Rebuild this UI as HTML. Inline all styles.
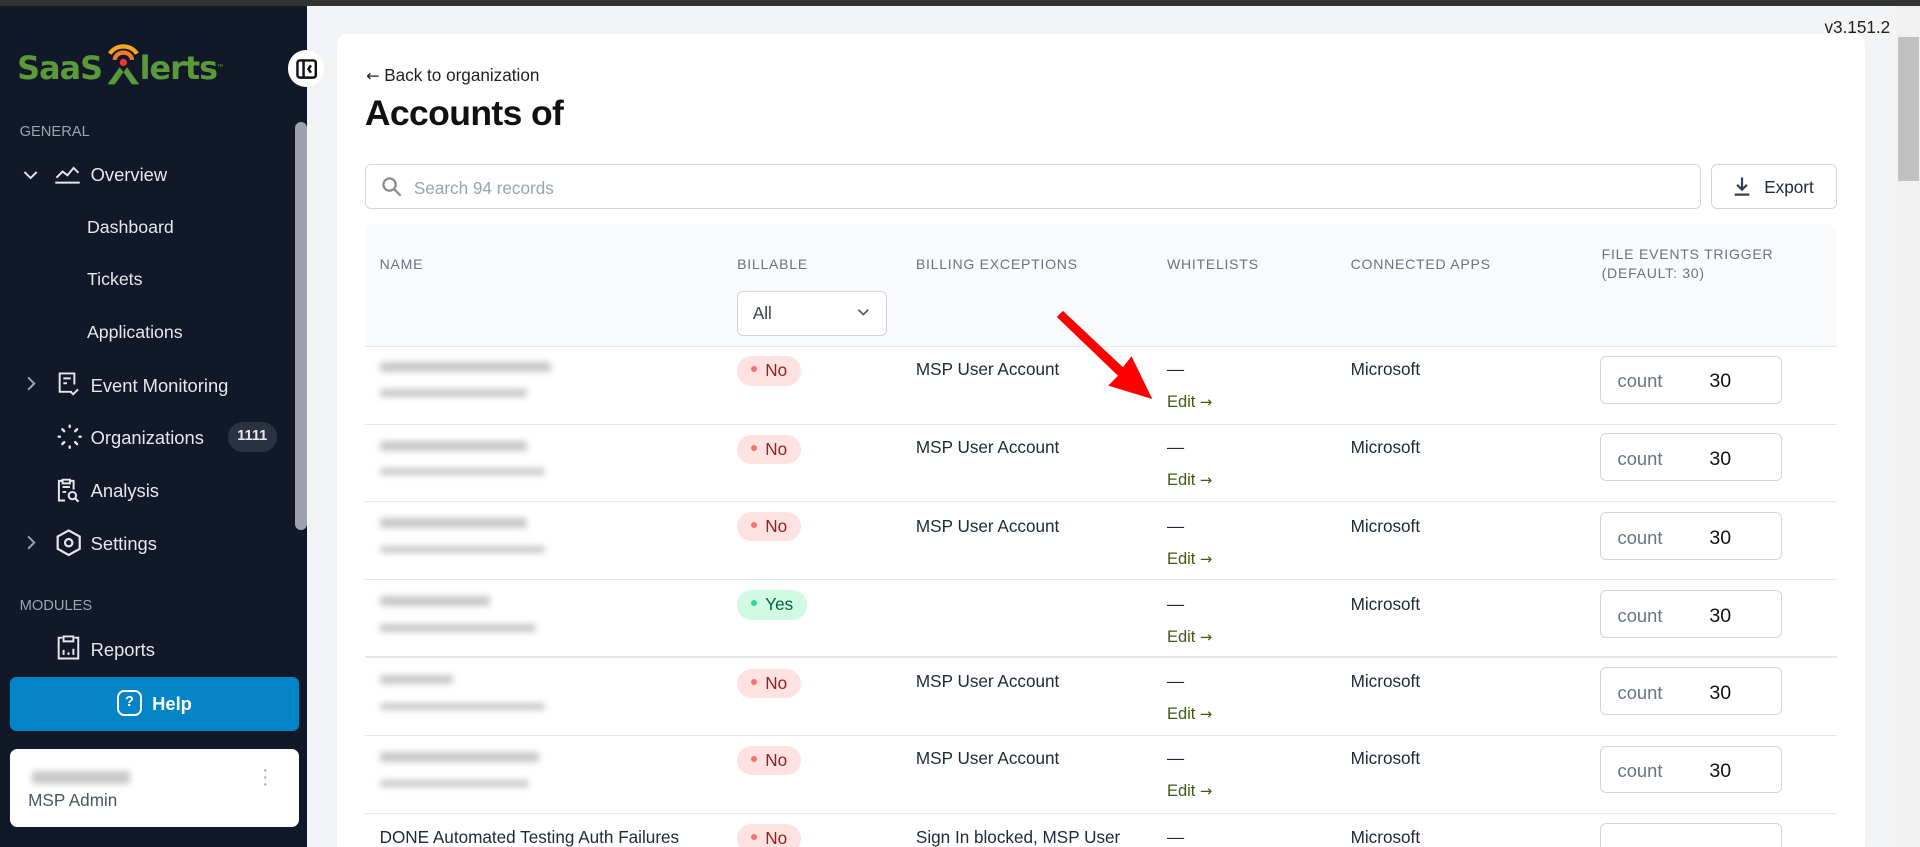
<!DOCTYPE html>
<html><head><meta charset="utf-8"><style>
*{box-sizing:border-box;margin:0;padding:0}
html,body{width:1920px;height:847px;overflow:hidden;background:#f3f4f6}
#r{zoom:1.22449;width:1568px;height:692px;position:relative;font-family:"Liberation Sans",sans-serif;overflow:hidden}
.a{position:absolute}
.sb{left:0;top:0;width:251px;height:692px;background:#111827;color:#e5e7eb}
.nav{font-size:15px;color:#e5e7eb}
.sec{font-size:12px;color:#9ca3af}
.hd{font-size:11.5px;color:#6b7280;letter-spacing:.6px}
.t{font-size:14px;color:#1f2937}
.bl{background:#c8c8c8;filter:blur(2.5px);height:8px;border-radius:2px}
.pill{height:24px;border-radius:12px;font-size:14px;padding:0 11px 0 11px;line-height:24px}
.no{background:#fee2e2;color:#991b1b}
.yes{background:#d1fae5;color:#065f46}
.dot{display:inline-block;width:5px;height:5px;border-radius:50%;margin-right:7px;vertical-align:middle;position:relative;top:-2px}
.cnt{width:148px;height:39px;border:1px solid #d1d5db;border-radius:5px;background:#fff}
.edit{font-size:13.5px;color:#3f5b12}
.ar{font-family:"DejaVu Sans",sans-serif;font-size:12px}
.lg{position:absolute;top:36px;font-size:26px;font-weight:bold;color:#5a9a3a;letter-spacing:-.8px;font-family:'DejaVu Sans',sans-serif;line-height:30px}
</style></head><body><div id="r">
<div class="a" style="left:0;top:0;width:1568px;height:5px;background:#333"></div>
<div class="a sb" style="top:5px">
 <div class="lg" style="left:14px">SaaS</div>
 <div class="lg" style="left:114px">lerts<span style="font-size:6px;vertical-align:top;letter-spacing:0">™</span></div>
 <svg class="a" style="left:86px;top:31px" width="30" height="36"><path d="M4 8 A12 10 0 0 1 26 8" stroke="#f5a623" stroke-width="3.5" fill="none"/><path d="M8 13 A7 6 0 0 1 22 13" stroke="#f07b2b" stroke-width="3.5" fill="none"/><circle cx="15" cy="15" r="3" fill="#e53935"/><path d="M2 33 L12 19 L15 23 L8 33Z M28 33 L18 19 L15 23 L22 33Z" fill="#5a9a3a"/></svg>
 <div class="a sec" style="left:16px;top:96px">GENERAL</div>
 <svg class="a" style="left:18px;top:131px" width="14" height="14"><path d="M2 4l5 5 5-5" stroke="#e5e7eb" stroke-width="1.6" fill="none"/></svg>
 <svg class="a" style="left:44px;top:128px" width="22" height="18"><path d="M2 12l5-5 4 3 5-6 4 4M1 16h20" stroke="#e5e7eb" stroke-width="1.6" fill="none"/></svg>
 <div class="a nav" style="left:74px;top:129px">Overview</div>
 <div class="a nav" style="left:71px;top:172px;font-size:14.5px">Dashboard</div>
 <div class="a nav" style="left:71px;top:215px;font-size:14.5px">Tickets</div>
 <div class="a nav" style="left:71px;top:258px;font-size:14.5px">Applications</div>
 <svg class="a" style="left:18px;top:301px" width="14" height="14"><path d="M5 2l5 5-5 5" stroke="#9ca3af" stroke-width="1.6" fill="none"/></svg>
 <svg class="a" style="left:46px;top:298px" width="22" height="22"><path d="M13 17H3V2h12v9M6 6h6M6 10h3M12 17l2 2 4-4" stroke="#e5e7eb" stroke-width="1.6" fill="none"/></svg>
 <div class="a nav" style="left:74px;top:301px">Event Monitoring</div>
 <svg class="a" style="left:45px;top:340px" width="24" height="24"><g stroke="#e5e7eb" stroke-width="2" stroke-linecap="round"><path d="M12 3v1M12 20v1M3 12h1M20 12h1M6 6l1.5 1.5M16.5 16.5L18 18M6 18l1.5-1.5M16.5 7.5L18 6"/></g></svg>
 <div class="a nav" style="left:74px;top:344px">Organizations</div>
 <div class="a" style="left:186px;top:340px;width:40px;height:24px;border-radius:12px;background:#2a3140;color:#e5e7eb;font-size:12px;font-weight:bold;text-align:center;line-height:24px">1111</div>
 <svg class="a" style="left:44px;top:384px" width="24" height="24"><path d="M9 20H4V4h3M13 4h3v7M7 3h6v3H7zM7 9h6M7 13h3" stroke="#e5e7eb" stroke-width="1.6" fill="none"/><circle cx="15" cy="16" r="3" stroke="#e5e7eb" stroke-width="1.6" fill="none"/><path d="M17 18l3 3" stroke="#e5e7eb" stroke-width="1.8"/></svg>
 <div class="a nav" style="left:74px;top:387px">Analysis</div>
 <svg class="a" style="left:18px;top:431px" width="14" height="14"><path d="M5 2l5 5-5 5" stroke="#9ca3af" stroke-width="1.6" fill="none"/></svg>
 <svg class="a" style="left:44px;top:426px" width="24" height="26"><path d="M12 2l9 5v10l-9 5-9-5V7z" stroke="#e5e7eb" stroke-width="1.8" fill="none"/><circle cx="12" cy="12" r="3" stroke="#e5e7eb" stroke-width="1.8" fill="none"/></svg>
 <div class="a nav" style="left:74px;top:430px">Settings</div>
 <div class="a sec" style="left:16px;top:483px">MODULES</div>
 <svg class="a" style="left:45px;top:513px" width="22" height="22"><path d="M6 3H3v17h16V3h-3M7 2h8v4H7zM7 17v-4M11 17v-2M15 17v-5" stroke="#e5e7eb" stroke-width="1.6" fill="none"/></svg>
 <div class="a nav" style="left:74px;top:517px">Reports</div>
 <div class="a" style="left:241px;top:95px;width:10px;height:333px;background:#9ca3af;border-radius:5px"></div>
 <div class="a" style="left:8px;top:548px;width:236px;height:44px;background:#0284c7;border-radius:5px;color:#fff;font-weight:bold;font-size:15px;text-align:center;line-height:44px"><span style="display:inline-block;width:21px;height:21px;border:2px solid #fff;border-radius:6px;font-size:12px;line-height:17px;vertical-align:middle;margin-right:8px;position:relative;top:-2px">?</span>Help</div>
 <div class="a" style="left:8px;top:607px;width:236px;height:63px;background:#fff;border-radius:6px">
  <div class="a bl" style="left:18px;top:18px;width:80px;height:10px"></div>
  <div class="a" style="left:15px;top:33px;font-size:14px;color:#4b5563">MSP Admin</div>
  <div class="a" style="left:206px;top:14px;color:#9ca3af;font-size:16px;line-height:6px">·<br>·<br>·</div>
 </div>
</div>
<div class="a" style="left:235px;top:41px;width:30px;height:30px;border-radius:50%;background:#fff"></div>
<svg class="a" style="left:241px;top:47px" width="20" height="18"><rect x="2" y="2" width="15" height="14" rx="2" stroke="#111" stroke-width="2" fill="none"/><path d="M7 2v14M13 6l-2 3 2 3" stroke="#111" stroke-width="2" fill="none"/></svg>
<div class="a" style="left:1490px;top:14px;font-size:14px;color:#222">v3.151.2</div>
<div class="a" style="left:1549px;top:5px;width:19px;height:687px;background:#f1f1f1"></div>
<div class="a" style="left:1550px;top:30px;width:17px;height:118px;background:#c1c1c1"></div>
<div class="a" style="left:275px;top:28px;width:1248px;height:670px;background:#fff;border-radius:8px"></div>
<div class="a" style="left:299px;top:53px;font-size:14px;color:#222"><span class="ar" style="font-size:13px">←</span> Back to organization</div>
<div class="a" style="left:298px;top:76px;font-size:29px;font-weight:bold;color:#111;letter-spacing:-.5px">Accounts of</div>
<div class="a" style="left:298px;top:134px;width:1091px;height:37px;border:1px solid #d1d5db;border-radius:5px"></div>
<svg class="a" style="left:311px;top:144px" width="18" height="18"><circle cx="7" cy="7" r="5" stroke="#888" stroke-width="1.8" fill="none"/><path d="M11 11l5 5" stroke="#888" stroke-width="1.8"/></svg>
<div class="a" style="left:338px;top:145px;font-size:14px;color:#9ca3af">Search 94 records</div>
<div class="a" style="left:1397px;top:134px;width:103px;height:37px;border:1px solid #d1d5db;border-radius:5px;font-size:14px;color:#1f2937;line-height:36px;padding-left:43px">Export</div>
<svg class="a" style="left:1414px;top:143px" width="18" height="18"><path d="M9 2v10M5 8l4 4 4-4M3 16h12" stroke="#334155" stroke-width="1.8" fill="none"/></svg>
<div class="a" style="left:298px;top:183px;width:1202px;height:100px;background:#f9fafb;border-radius:8px 8px 0 0;border-bottom:1px solid #e5e7eb"></div>
<div class="a hd" style="left:310px;top:209px">NAME</div>
<div class="a hd" style="left:602px;top:209px">BILLABLE</div>
<div class="a hd" style="left:748px;top:209px">BILLING EXCEPTIONS</div>
<div class="a hd" style="left:953px;top:209px">WHITELISTS</div>
<div class="a hd" style="left:1103px;top:209px">CONNECTED APPS</div>
<div class="a hd" style="left:1308px;top:200px;line-height:16px">FILE EVENTS TRIGGER<br>(DEFAULT: 30)</div>
<div class="a" style="left:602px;top:238px;width:122px;height:36px;border:1px solid #d1d5db;border-radius:5px;background:#fff;font-size:14px;color:#374151;line-height:35px;padding-left:12px">All</div>
<svg class="a" style="left:699px;top:250px" width="12" height="10"><path d="M2 3l4 4 4-4" stroke="#555" stroke-width="1.4" fill="none"/></svg>

<div class="a" style="left:298px;top:346px;width:1202px;height:1px;background:#e5e7eb"></div>
<div class="a" style="left:298px;top:409px;width:1202px;height:1px;background:#e5e7eb"></div>
<div class="a" style="left:298px;top:473px;width:1202px;height:1px;background:#e5e7eb"></div>
<div class="a" style="left:298px;top:536px;width:1202px;height:1px;background:#e5e7eb"></div>
<div class="a" style="left:298px;top:600px;width:1202px;height:1px;background:#e5e7eb"></div>
<div class="a" style="left:298px;top:664px;width:1202px;height:1px;background:#e5e7eb"></div>

<div class="a bl" style="left:310px;top:296px;width:140px"></div><div class="a bl" style="left:310px;top:318px;width:120px;height:6px"></div>
<div class="a pill no" style="left:602px;top:291px"><span class="dot" style="background:#f87171"></span>No</div>
<div class="a t" style="left:748px;top:293px">MSP User Account</div>
<div class="a t" style="left:953px;top:293px">—</div><div class="a edit" style="left:953px;top:320px">Edit <span class="ar">→</span></div>
<div class="a t" style="left:1103px;top:293px">Microsoft</div>
<div class="a cnt" style="left:1307px;top:291px"></div><div class="a" style="left:1321px;top:302px;font-size:15px;color:#6b7280">count</div><div class="a" style="left:1396px;top:302px;font-size:16px;color:#111">30</div>

<div class="a bl" style="left:310px;top:360px;width:120px"></div><div class="a bl" style="left:310px;top:382px;width:135px;height:6px"></div>
<div class="a pill no" style="left:602px;top:355px"><span class="dot" style="background:#f87171"></span>No</div>
<div class="a t" style="left:748px;top:357px">MSP User Account</div>
<div class="a t" style="left:953px;top:357px">—</div><div class="a edit" style="left:953px;top:384px">Edit <span class="ar">→</span></div>
<div class="a t" style="left:1103px;top:357px">Microsoft</div>
<div class="a cnt" style="left:1307px;top:354px"></div><div class="a" style="left:1321px;top:366px;font-size:15px;color:#6b7280">count</div><div class="a" style="left:1396px;top:366px;font-size:16px;color:#111">30</div>

<div class="a bl" style="left:310px;top:423px;width:120px"></div><div class="a bl" style="left:310px;top:446px;width:135px;height:6px"></div>
<div class="a pill no" style="left:602px;top:418px"><span class="dot" style="background:#f87171"></span>No</div>
<div class="a t" style="left:748px;top:421px">MSP User Account</div>
<div class="a t" style="left:953px;top:421px">—</div><div class="a edit" style="left:953px;top:448px">Edit <span class="ar">→</span></div>
<div class="a t" style="left:1103px;top:421px">Microsoft</div>
<div class="a cnt" style="left:1307px;top:418px"></div><div class="a" style="left:1321px;top:430px;font-size:15px;color:#6b7280">count</div><div class="a" style="left:1396px;top:430px;font-size:16px;color:#111">30</div>

<div class="a bl" style="left:310px;top:487px;width:90px"></div><div class="a bl" style="left:310px;top:510px;width:128px;height:6px"></div>
<div class="a pill yes" style="left:602px;top:482px"><span class="dot" style="background:#34d399"></span>Yes</div>
<div class="a t" style="left:953px;top:485px">—</div><div class="a edit" style="left:953px;top:512px">Edit <span class="ar">→</span></div>
<div class="a t" style="left:1103px;top:485px">Microsoft</div>
<div class="a cnt" style="left:1307px;top:482px"></div><div class="a" style="left:1321px;top:494px;font-size:15px;color:#6b7280">count</div><div class="a" style="left:1396px;top:494px;font-size:16px;color:#111">30</div>

<div class="a bl" style="left:310px;top:551px;width:60px"></div><div class="a bl" style="left:310px;top:574px;width:135px;height:6px"></div>
<div class="a pill no" style="left:602px;top:546px"><span class="dot" style="background:#f87171"></span>No</div>
<div class="a t" style="left:748px;top:548px">MSP User Account</div>
<div class="a t" style="left:953px;top:548px">—</div><div class="a edit" style="left:953px;top:575px">Edit <span class="ar">→</span></div>
<div class="a t" style="left:1103px;top:548px">Microsoft</div>
<div class="a cnt" style="left:1307px;top:545px"></div><div class="a" style="left:1321px;top:557px;font-size:15px;color:#6b7280">count</div><div class="a" style="left:1396px;top:557px;font-size:16px;color:#111">30</div>

<div class="a bl" style="left:310px;top:614px;width:130px"></div><div class="a bl" style="left:310px;top:637px;width:122px;height:6px"></div>
<div class="a pill no" style="left:602px;top:609px"><span class="dot" style="background:#f87171"></span>No</div>
<div class="a t" style="left:748px;top:611px">MSP User Account</div>
<div class="a t" style="left:953px;top:611px">—</div><div class="a edit" style="left:953px;top:638px">Edit <span class="ar">→</span></div>
<div class="a t" style="left:1103px;top:611px">Microsoft</div>
<div class="a cnt" style="left:1307px;top:609px"></div><div class="a" style="left:1321px;top:621px;font-size:15px;color:#6b7280">count</div><div class="a" style="left:1396px;top:621px;font-size:16px;color:#111">30</div>

<div class="a t" style="left:310px;top:675px">DONE Automated Testing Auth Failures</div>
<div class="a pill no" style="left:602px;top:673px"><span class="dot" style="background:#f87171"></span>No</div>
<div class="a t" style="left:748px;top:675px">Sign In blocked, MSP User</div>
<div class="a t" style="left:953px;top:675px">—</div>
<div class="a t" style="left:1103px;top:675px">Microsoft</div>
<div class="a cnt" style="left:1307px;top:672px"></div>
<svg class="a" style="left:855px;top:250px" width="95" height="85"><polygon points="8,9 13,4 62,50 69,41 86,76 50,65 58,57" fill="#ff0000"/></svg>
</div></body></html>
